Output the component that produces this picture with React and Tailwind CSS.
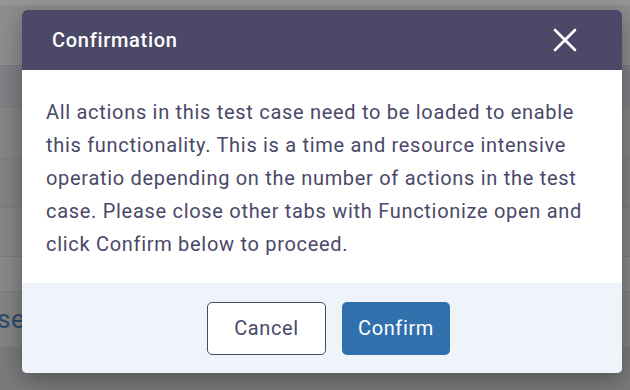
import { X } from 'lucide-react'

const ROWS = [
  { h: 'h-[61px]', bg: 'bg-[#8e8e8e]' },
  { h: 'h-[42px]', bg: 'bg-[#808087]' },
  { h: 'h-[51px]', bg: 'bg-[#868686]' },
  { h: 'h-[49px]', bg: 'bg-[#838386]' },
  { h: 'h-[49px]', bg: 'bg-[#878787]' },
  { h: 'h-[35px]', bg: 'bg-[#898989]' },
]

export default function App() {
  return (
    <div className="relative w-[630px] h-[390px] overflow-hidden font-['Roboto',sans-serif]">
      {/* page behind the overlay */}
      <div className="flex flex-col">
        <div className="h-[5px] bg-[#979797]" />
        {ROWS.map((r, i) => (
          <div key={i} className={`${r.h} ${r.bg} border-b border-[#7d7d7d]`} />
        ))}
        <div className="h-[55px] bg-[#848484] flex items-center">
          <span className="-ml-[3px] text-[26px] text-[#2e4b6c] tracking-[0.5px]">ser</span>
        </div>
        <div className="h-[48px] bg-[#7b7b7b]" />
      </div>

      {/* modal */}
      <div className="absolute left-[22px] top-[10px] w-[600px] rounded-[5px] overflow-hidden bg-white shadow-[0_6px_24px_rgba(0,0,0,0.35)]">
        <div className="h-[60px] bg-[#4b4868] flex items-center justify-between pl-[30px] pr-[37px]">
          <span className="text-white text-[20px] font-medium tracking-[0.7px]">Confirmation</span>
          <X className="w-[40px] h-[40px] text-white" strokeWidth={1.6} />
        </div>
        <div className="px-6 pt-[26px] pb-[22px] text-[20px] leading-[33px] tracking-[0.7px] text-[#4a4868]">
          All actions in this test case need to be loaded to enable this functionality. This is a time and resource intensive operatio depending on the number of actions in the test case. Please close other tabs with Functionize open and click Confirm below to proceed.
        </div>
        <div className="h-[90px] bg-[#eff3fa] flex items-center justify-center gap-4 pl-[13px]">
          <button className="w-[119px] h-[53px] rounded-[5px] border border-[#4a4868] bg-white text-[20px] tracking-[0.6px] text-[#4a4868]">Cancel</button>
          <button className="w-[108px] h-[53px] rounded-[5px] bg-[#2f70ad] text-[20px] tracking-[0.6px] text-white">Confirm</button>
        </div>
      </div>
    </div>
  )
}
